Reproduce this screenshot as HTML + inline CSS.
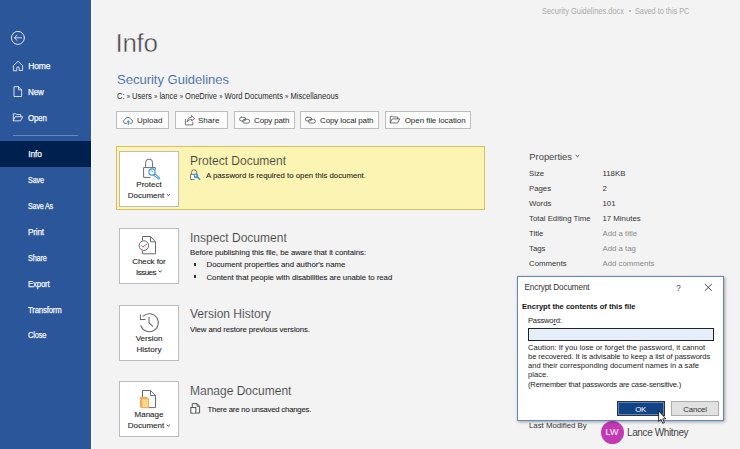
<!DOCTYPE html>
<html><head><meta charset="utf-8">
<style>
*{margin:0;padding:0;box-sizing:border-box}
html,body{width:740px;height:449px;overflow:hidden;background:#f3f3f3;font-family:"Liberation Sans",sans-serif;position:relative}
.a{position:absolute;white-space:nowrap}
#side{position:absolute;left:0;top:0;width:90.5px;height:449px;background:#2b579a}
#sideedge{position:absolute;left:90.5px;top:0;width:1.4px;height:449px;background:#fbfbfb}
.nav{position:absolute;left:28.3px;color:#f4f6fa;font-size:8.5px;line-height:10px;letter-spacing:-0.2px;-webkit-text-stroke:0.25px #f4f6fa}
#infoband{position:absolute;left:0;top:140.8px;width:90.5px;height:25.9px;background:#002050}
#sep{position:absolute;left:12.9px;top:135.1px;width:64.8px;height:1.4px;background:#6688c0}
.ico{position:absolute}

.btn{position:absolute;top:111px;height:18px;background:#fcfcfc;border:1px solid #bdbdbd}
.rq{font-size:6.5px}
.btn span{position:absolute;top:4px;font-size:8px;color:#2a2a2a;line-height:10px;white-space:nowrap}
.bi{position:absolute}
.bigbtn{position:absolute;left:119px;width:60px;background:#fff;border:1px solid #bcbcbc}
.bt{position:absolute;left:0;width:100%;text-align:center;font-size:8px;color:#222;-webkit-text-stroke:0.1px #222;line-height:10.5px}
.sp{display:inline-block;width:6px}
.chev{font-size:6px}
.h{position:absolute;left:190px;font-size:12px;color:#444;-webkit-text-stroke:0.1px #f3f3f3;line-height:15px;white-space:nowrap}
.t{position:absolute;font-size:7.8px;color:#222;-webkit-text-stroke:0.08px #222;line-height:9px;white-space:nowrap}
.pl{position:absolute;left:529px;font-size:7.8px;color:#333;line-height:10px;white-space:nowrap}
.pv{position:absolute;left:602.5px;font-size:7.8px;color:#333;line-height:10px;white-space:nowrap}
.pv.g{color:#8a8a8a}
#dlg{position:absolute;left:517px;top:276px;width:207px;height:145px;background:#fff;border:1px solid #6088c4;box-shadow:1px 1px 3px rgba(0,0,0,0.35)}
</style></head><body>
<div id="side"></div>
<div id="sideedge"></div>
<div id="infoband"></div>
<div id="sep"></div>
<!-- back arrow -->
<!-- home -->
<div class="nav" style="top:61px">Home</div>
<!-- new -->
<div class="nav" style="top:87px;transform:scaleX(0.95);transform-origin:0 0">New</div>
<!-- open -->
<div class="nav" style="top:113px;transform:scaleX(0.935);transform-origin:0 0">Open</div>
<div class="nav" style="top:149px">Info</div>
<div class="nav" style="top:175px;transform:scaleX(0.85);transform-origin:0 0">Save</div>
<div class="nav" style="top:201px;transform:scaleX(0.84);transform-origin:0 0">Save As</div>
<div class="nav" style="top:226.8px;transform:scaleX(0.965);transform-origin:0 0">Print</div>
<div class="nav" style="top:252.6px;transform:scaleX(0.86);transform-origin:0 0">Share</div>
<div class="nav" style="top:278.6px;transform:scaleX(0.92);transform-origin:0 0">Export</div>
<div class="nav" style="top:304.5px;transform:scaleX(0.917);transform-origin:0 0">Transform</div>
<div class="nav" style="top:330.3px;transform:scaleX(0.88);transform-origin:0 0">Close</div>

<!-- top right -->
<div class="a" style="left:542.4px;top:4.85px;font-size:9px;line-height:12px;color:#aaa;transform:scaleX(0.828);transform-origin:0 0">Security Guidelines.docx</div>
<div style="position:absolute;left:629.3px;top:10.3px;width:1.8px;height:1.8px;border-radius:1px;background:#aaa"></div>
<div class="a" style="left:635.2px;top:4.85px;font-size:9px;line-height:12px;color:#aaa;transform:scaleX(0.81);transform-origin:0 0">Saved to this PC</div>

<div class="a" style="left:115.5px;top:28px;font-size:26px;color:#444;line-height:30px;-webkit-text-stroke:0.5px #f3f3f3;letter-spacing:-0.3px">Info</div>
<div class="a" style="left:117px;top:71.5px;font-size:13px;color:#2f5c9e;line-height:15px;-webkit-text-stroke:0.15px #f3f3f3">Security Guidelines</div>
<div class="a" style="left:116.5px;top:90.5px;font-size:8.3px;color:#2a2a2a;line-height:10px;transform:scaleX(0.913);transform-origin:0 0">C: <span class="rq">»</span> Users <span class="rq">»</span> lance <span class="rq">»</span> OneDrive <span class="rq">»</span> Word Documents <span class="rq">»</span> Miscellaneous</div>


<!-- action buttons -->
<div class="btn" style="left:116px;width:53px">
<span style="left:20px">Upload</span></div>
<div class="btn" style="left:175px;width:53px">
<span style="left:22px">Share</span></div>
<div class="btn" style="left:234px;width:61px">
<span style="left:19px;letter-spacing:-0.14px">Copy path</span></div>
<div class="btn" style="left:300px;width:79px">
<span style="left:19px;letter-spacing:-0.12px">Copy local path</span></div>
<div class="btn" style="left:385px;width:86px">
<span style="left:18.7px;letter-spacing:-0.05px">Open file location</span></div>

<!-- protect -->
<div style="position:absolute;left:116px;top:146px;width:369px;height:64px;background:#fcf4b2;border:1px solid #d9be5d"></div>
<div class="bigbtn" style="top:151px;height:56px">
<div class="bt" style="top:28px">Protect<br>Document<span class="sp"></span></div></div>
<div class="h" style="top:153.5px;-webkit-text-stroke-color:#fcf4b2">Protect Document</div>
<div class="t" style="left:206px;top:171px">A password is required to open this document.</div>

<!-- inspect -->
<div class="bigbtn" style="top:228px;height:56px">
<div class="bt" style="top:28px"><span style="letter-spacing:-0.1px">Check for</span><br><span style="letter-spacing:-0.5px">Issues</span><span class="sp"></span></div></div>
<div class="h" style="top:230.6px">Inspect Document</div>
<div class="t" style="left:190px;top:248px;letter-spacing:-0.03px">Before publishing this file, be aware that it contains:</div>
<div style="position:absolute;left:193.5px;top:262.8px;width:2.9px;height:2.9px;background:#333"></div>
<div class="t" style="left:206.5px;top:260.2px">Document properties and author's name</div>
<div style="position:absolute;left:193.5px;top:275.1px;width:2.9px;height:2.9px;background:#333"></div>
<div class="t" style="left:206.5px;top:272.8px;letter-spacing:-0.035px">Content that people with disabilities are unable to read</div>

<!-- version -->
<div class="bigbtn" style="top:305px;height:56px">
<div class="bt" style="top:28px">Version<br>History</div></div>
<div class="h" style="top:307px">Version History</div>
<div class="t" style="left:190px;top:325px;letter-spacing:-0.1px">View and restore previous versions.</div>

<!-- manage -->
<div class="bigbtn" style="top:381px;height:56px">
<div class="bt" style="top:28px">Manage<br>Document<span class="sp"></span></div></div>
<div class="h" style="top:383.6px">Manage Document</div>
<div class="t" style="left:207.5px;top:404.8px;letter-spacing:-0.22px">There are no unsaved changes.</div>

<!-- properties -->
<div class="a" style="left:529.3px;top:150.6px;font-size:9.4px;color:#444;line-height:12px">Properties</div>
<div class="pl" style="top:169px">Size</div><div class="pv" style="top:169px">118KB</div>
<div class="pl" style="top:184px">Pages</div><div class="pv" style="top:184px">2</div>
<div class="pl" style="top:199px">Words</div><div class="pv" style="top:199px">101</div>
<div class="pl" style="top:214px">Total Editing Time</div><div class="pv" style="top:214px">17 Minutes</div>
<div class="pl" style="top:229px">Title</div><div class="pv g" style="top:229px">Add a title</div>
<div class="pl" style="top:244px">Tags</div><div class="pv g" style="top:244px">Add a tag</div>
<div class="pl" style="top:259px">Comments</div><div class="pv g" style="top:259px">Add comments</div>

<div class="pl" style="top:421px">Last Modified By</div>
<div style="position:absolute;left:600.5px;top:421px;width:23px;height:23px;border-radius:50%;background:#c239b3"></div>
<div class="a" style="left:600px;top:427px;width:24px;text-align:center;font-size:9px;color:#fff;line-height:11px">LW</div>
<div class="a" style="left:627px;top:427px;font-size:10px;color:#444;line-height:12px;letter-spacing:-0.38px">Lance Whitney</div>

<!-- dialog -->
<div id="dlg"><div style="position:absolute;left:0;top:0.5px;width:205px;height:142px">
<div class="a" style="left:6.5px;top:5px;font-size:8.2px;color:#333;line-height:10px;letter-spacing:-0.15px">Encrypt Document</div>
<div class="a" style="left:158.3px;top:5px;font-size:9px;color:#444;line-height:10px;transform:scaleX(0.9)">?</div>
<div class="a" style="left:4px;top:24px;font-size:7.6px;font-weight:bold;color:#111;line-height:10px">Encrypt the contents of this file</div>
<div class="a" style="left:10px;top:38.8px;font-size:7.6px;color:#222;line-height:10px;letter-spacing:-0.2px">Passwo<u style="text-decoration-thickness:0.5px;text-underline-offset:1px">r</u>d:</div>
<div style="position:absolute;left:9.5px;top:50px;width:186px;height:13px;background:#e5eef9;border:1.5px solid #222"></div>
<div class="a" id="caution" style="left:10px;top:65.2px;font-size:7.6px;color:#222;line-height:9.25px"><span style="letter-spacing:0.03px">Caution: If you lose or forget the password, it cannot</span><br><span style="letter-spacing:-0.07px">be recovered. It is advisable to keep a list of passwords</span><br>and their corresponding document names in a safe<br>place.<br><span style="letter-spacing:-0.18px">(Remember that passwords are case-sensitive.)</span></div>
<div style="position:absolute;left:98.5px;top:123.8px;width:48.3px;height:14.4px;background:#124384;border:1px solid #333;box-shadow:inset 0 0 0 1px #5a85c4;color:#fff;font-size:7.8px;line-height:15.5px;text-align:center;letter-spacing:-0.2px">OK</div>
<div style="position:absolute;left:153px;top:123.8px;width:48.2px;height:14.4px;background:#e1e1e1;border:1px solid #adadad;color:#333;font-size:7.8px;line-height:15.5px;text-align:center;letter-spacing:-0.1px">Cancel</div>
</div></div>
<!-- cursor -->
<svg id="ov" width="740" height="449" viewBox="0 0 740 449" style="position:absolute;left:0;top:0;pointer-events:none">
<g fill="none" stroke="#e6ebf4" stroke-width="0.9" stroke-linejoin="round" stroke-linecap="round">
<circle cx="17.9" cy="37.9" r="6.5" stroke-width="1"/>
<path d="M14.4 37.8H21.6M17.1 35.1L14.4 37.8L17.1 40.5"/>
<path d="M13.4 70.4V65.6L18 61.3L22.6 65.6V70.4H19.2V68A1.2 1.2 0 0 0 16.8 68V70.4Z"/>
<path d="M14.4 86.7H18.5L21.6 89.8V96.5H14.4Z M18.5 86.7V89.8H21.6"/>
<path d="M13.3 120.5V113.8H15.8L16.8 114.5H20.7V116.5 M13.3 120.5L15.1 116.7H22.7L20.8 120.5Z"/>
</g>
<g fill="none" stroke="#666" stroke-width="0.9" stroke-linejoin="round" stroke-linecap="round">
<path d="M126.6 123.3H125A1.9 1.9 0 0 1 124.9 119.6A3.2 3.2 0 0 1 130.9 119.4A2 2 0 0 1 131.1 123.3H130.1"/>
<path d="M185.4 119.4V124.9H192.8V122.1"/>
<path d="M187.3 121.4C187.6 118.8 189.2 117.3 191.5 117.1V115.5L194.6 118.4L191.7 120.9V119.4C189.8 119.4 188.4 120.1 187.3 121.4Z"/>
<rect x="239.6" y="117.3" width="6.2" height="3.7" rx="1.85"/>
<rect x="242.6" y="119.3" width="7" height="3.8" rx="1.9"/>
<rect x="305.4" y="117.3" width="6.2" height="3.7" rx="1.85"/>
<rect x="308.4" y="119.3" width="7" height="3.8" rx="1.9"/>
<path d="M390.3 122.6V116.3H392.8L393.8 117H397.8V118.8 M390.3 122.6L392.1 118.9H399.8L397.8 122.6Z"/>
</g>
<path d="M128.3 125V121.5" stroke="#2f8ee0" stroke-width="1.1"/><path d="M126.6 122.2L128.3 120.1L130 122.2Z" fill="#2f8ee0"/>
<!-- protect big -->
<g fill="none" stroke="#6a6a6a" stroke-width="1">
<path d="M145.6 167.4V162.6A3.5 3.5 0 0 1 152.6 162.6V167.4"/>
<path d="M150.5 177.4H143.6V167.6H155.4V169.5" fill="#fff"/>
</g>
<path d="M154.4 174.6L158.6 178" stroke="#3d98dc" stroke-width="2.8" stroke-linecap="round"/>
<path d="M154.6 174.8L158.5 177.9" stroke="#fff" stroke-width="0.9" stroke-linecap="round"/>
<circle cx="152" cy="172" r="3.1" fill="#fff" stroke="#3d98dc" stroke-width="1.15"/>
<path d="M151.3 170.6L152.6 171.9" stroke="#3d98dc" stroke-width="1" stroke-linecap="round"/>
<!-- protect small -->
<g fill="none" stroke="#666" stroke-width="0.9">
<path d="M191.5 174V172.4A2.6 2.6 0 0 1 196.7 172.4V174"/>
<path d="M194.5 179.5H190.6V174.3H196.8" fill="#fff"/>
</g>
<circle cx="196" cy="175.9" r="2.4" fill="#3d98dc"/>
<path d="M197.3 177.2L199.6 179.2" stroke="#3d98dc" stroke-width="1.6" stroke-linecap="round"/>
<circle cx="195.6" cy="175.6" r="0.8" fill="#fff"/>
<!-- check for issues -->
<g fill="none" stroke="#6a6a6a" stroke-width="1" stroke-linejoin="miter">
<path d="M142.5 240.5V236.5H150.5L155.5 241.8V253.8H142.5V250.8"/>
<path d="M150.5 236.5V241.8H155.5"/>
<circle cx="143.9" cy="245.6" r="4.8" fill="#fff"/>
</g>
<path d="M141.4 245.6L142.9 247.1L146.6 244.2" fill="none" stroke="#e8474c" stroke-width="1" stroke-linecap="round"/>
<!-- version history -->
<g fill="none" stroke="#6a6a6a" stroke-width="1.05" stroke-linecap="round">
<path d="M143.16 316.12A9 9 0 1 1 140.84 325.78"/>
<path d="M140.4 314.8V319.5H145.2"/>
<path d="M149 317.2V322.7L152.7 326.3"/>
</g>
<!-- manage big -->
<g fill="none" stroke="#6a6a6a" stroke-width="1">
<path d="M142.5 397V390.5H150.5L155.5 395.6V407.6H148.8"/>
<path d="M150.5 390.5V395.6H155.5"/>
</g>
<rect x="140.4" y="397.4" width="6.4" height="9.6" fill="#f7c77a" stroke="#ef9f4b" stroke-width="0.9"/>
<rect x="141.7" y="398.8" width="6.9" height="8.9" fill="#fbd98c" stroke="#ef9f4b" stroke-width="0.9"/>
<!-- manage small -->
<g fill="none" stroke="#555" stroke-width="1">
<path d="M192.3 406.8V403.6H197L199.6 406.2V413H196.3"/>
<path d="M197 403.6V406.2H199.6"/>
<rect x="190.8" y="407.5" width="5" height="5.6" fill="#f3f3f3"/>
<rect x="192.6" y="409" width="2.4" height="3.6" fill="#fff" stroke="none"/>
</g>
<!-- chevrons -->
<g fill="none" stroke="#444" stroke-width="0.95" stroke-linecap="round" stroke-linejoin="round">
<path d="M167.2 194.4L168.5 195.6L169.8 194.4"/>
<path d="M158.8 270.9L160.1 272.1L161.4 270.9"/>
<path d="M167 425L168.3 426.2L169.6 425"/>
<path d="M576 155.4L577.5 156.7L579 155.4" stroke="#555"/>
</g>
<!-- dialog close -->
<path d="M704.8 284L711.8 290.8M711.8 284L704.8 290.8" stroke="#333" stroke-width="0.9"/>
<!-- cursor -->
<path d="M658.6 410.8V421.5L661 419.3L662.8 423.3L664.4 422.6L662.7 418.8H665.9Z" fill="#fff" stroke="#000" stroke-width="0.8" stroke-linejoin="round"/>
</svg>
</body></html>
